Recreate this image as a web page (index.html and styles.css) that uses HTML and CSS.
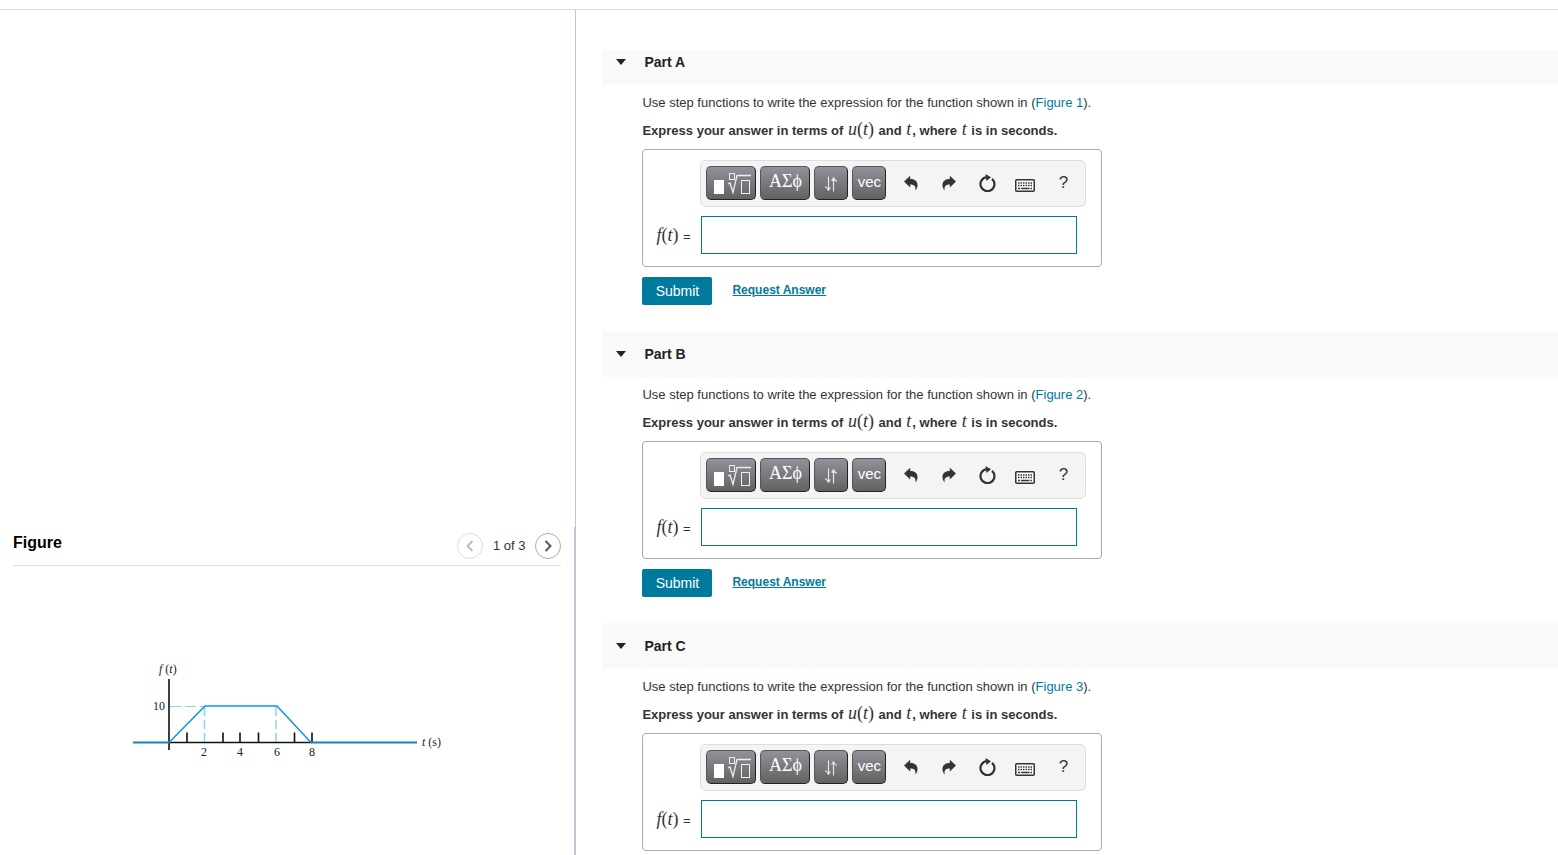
FILE: index.html
```html
<!DOCTYPE html>
<html lang="en">
<head>
    <meta charset="UTF-8">
    <meta name="viewport" content="width=device-width, initial-scale=1.0">
    <title>Step functions</title>
    <link rel="stylesheet" href="styles.css">
</head>
<body>
    <!-- shared icons -->
    <svg class="sprite" aria-hidden="true">
        <symbol id="i-root" viewBox="0 0 40 24">
            <rect x="3" y="9" width="10" height="14" fill="#fff"/>
            <g fill="none" stroke="#eee">
                <rect x="18.500" y="2.500" width="5" height="6"/>
                <path d="M17 13l2-1 3 9.500 4-17h14" stroke-width="1.300"/>
                <rect x="30.500" y="9.500" width="8" height="13"/>
            </g>
        </symbol>
        <symbol id="i-arrows" viewBox="0 0 16 18">
            <path d="M5.500 2.500v14M2 12.500c2 .8 3 2 3.500 4 .3-1.200 1-2.300 2-3M10.500 17.500v-14M8.500 6.500c1-.7 1.700-1.800 2-3 .5 2 1.500 3.200 3.500 4" fill="none" stroke="#e4e4e4" stroke-width="1.200"/>
        </symbol>
        <symbol id="i-undo" viewBox="0 0 16 16">
            <path d="M1 6.500L7.200.8V4c5 0 7.300 2.600 7.300 6 0 2.300-.9 4.200-2.200 5.500.7-3.800-.5-6-5.100-6v3z" fill="#333"/>
        </symbol>
        <symbol id="i-reset" viewBox="0 0 18 18">
            <path d="M14 4.800A7 7 0 1 1 8.500 3.200" fill="none" stroke="#333" stroke-width="2.200"/>
            <path d="M7.500 0l5.500 3.300-4.500 3.700z" fill="#333"/>
        </symbol>
        <symbol id="i-keyboard" viewBox="0 0 20 13">
            <rect x=".75" y=".75" width="18.500" height="11.500" rx="1" fill="#fff" stroke="#333" stroke-width="1.500"/>
            <path d="M3 4h14M3 6.500h14" stroke="#333" stroke-width="1.300" stroke-dasharray="1.500 1"/>
            <path d="M3 9.500h2M6 9.500h8.500M15.500 9.500H17" stroke="#333" stroke-width="1.300"/>
        </symbol>
        <symbol id="i-chevron" viewBox="0 0 8 12">
            <path d="M1.500 1l5 5-5 5" fill="none" stroke="currentColor" stroke-width="2"/>
        </symbol>
    </svg>

    <div class="wrapper">
        <div class="left">
            <section class="figure">
                <div class="figure-head">
                    <h2>Figure</h2>
                    <div class="pager">
                        <button type="button" class="prev" aria-label="Previous figure" disabled><svg><use href="#i-chevron"/></svg></button>
                        <span>1 of 3</span>
                        <button type="button" class="next" aria-label="Next figure"><svg><use href="#i-chevron"/></svg></button>
                    </div>
                </div>
                <svg class="graph" viewBox="0 0 320 110" role="img" aria-label="Graph of f(t)">
                    <g fill="none" stroke="#8ed0f5">
                        <path d="M43 51.500h35" stroke-dasharray="11 4"/>
                        <path d="M77.500 52v35M149 52v35" stroke-width="1.500" stroke-dasharray="9 4"/>
                    </g>
                    <path d="M42 24v71M42 87.500h143M60 87V77.500M96 87V77.500M113 87V77.500M131.500 87V77.500M167.500 87V77.500M185 87V77.500" fill="none" stroke="#111" stroke-width="1.600"/>
                    <path d="M6 87.500h36M184 87.500h106" stroke="#1480c8" stroke-width="2"/>
                    <path d="M42 87.500L78 51h72l34 36.500" fill="none" stroke="#0b95e9" stroke-width="1.500"/>
                    <g class="graph-text">
                        <text x="32" y="18"><tspan class="it">f</tspan> (<tspan class="it">t</tspan>)</text>
                        <text x="26" y="55">10</text>
                        <text x="74" y="101">2</text>
                        <text x="110" y="101">4</text>
                        <text x="147" y="101">6</text>
                        <text x="182" y="101">8</text>
                        <text x="295" y="91"><tspan class="it">t</tspan> (s)</text>
                    </g>
                </svg>
            </section>
        </div>

        <main class="right">
            <section class="part">
                <h3 class="part-head"><span class="caret"></span>Part A</h3>
                <div class="part-body">
                    <p>Use step functions to write the expression for the function shown in (<a href="#">Figure 1</a>).</p>
                    <p class="express">Express your answer in terms of <span class="math"><i>u</i>(<i>t</i>)</span> and <span class="math"><i>t</i></span>, where <span class="math"><i>t</i></span> is in seconds.</p>
                    <div class="answer">
                        <div class="toolbar">
                            <button type="button" class="key wide" aria-label="Templates"><svg class="root"><use href="#i-root"/></svg></button>
                            <button type="button" class="key wide greek">ΑΣϕ</button>
                            <button type="button" class="key" aria-label="Sub and superscript"><svg class="arrows"><use href="#i-arrows"/></svg></button>
                            <button type="button" class="key vec">vec</button>
                            <div class="tools">
                                <button type="button" aria-label="Undo"><svg><use href="#i-undo"/></svg></button>
                                <button type="button" aria-label="Redo"><svg class="flip"><use href="#i-undo"/></svg></button>
                                <button type="button" aria-label="Reset"><svg class="reset"><use href="#i-reset"/></svg></button>
                                <button type="button" aria-label="Keyboard"><svg class="keyboard"><use href="#i-keyboard"/></svg></button>
                                <button type="button">?</button>
                            </div>
                        </div>
                        <label for="ansA"><span class="math"><i>f</i>(<i>t</i>)</span> =</label>
                        <input type="text" id="ansA">
                    </div>
                    <div class="actions">
                        <button type="button" class="submit">Submit</button>
                        <a href="#">Request Answer</a>
                    </div>
                </div>
            </section>

            <section class="part">
                <h3 class="part-head"><span class="caret"></span>Part B</h3>
                <div class="part-body">
                    <p>Use step functions to write the expression for the function shown in (<a href="#">Figure 2</a>).</p>
                    <p class="express">Express your answer in terms of <span class="math"><i>u</i>(<i>t</i>)</span> and <span class="math"><i>t</i></span>, where <span class="math"><i>t</i></span> is in seconds.</p>
                    <div class="answer">
                        <div class="toolbar">
                            <button type="button" class="key wide" aria-label="Templates"><svg class="root"><use href="#i-root"/></svg></button>
                            <button type="button" class="key wide greek">ΑΣϕ</button>
                            <button type="button" class="key" aria-label="Sub and superscript"><svg class="arrows"><use href="#i-arrows"/></svg></button>
                            <button type="button" class="key vec">vec</button>
                            <div class="tools">
                                <button type="button" aria-label="Undo"><svg><use href="#i-undo"/></svg></button>
                                <button type="button" aria-label="Redo"><svg class="flip"><use href="#i-undo"/></svg></button>
                                <button type="button" aria-label="Reset"><svg class="reset"><use href="#i-reset"/></svg></button>
                                <button type="button" aria-label="Keyboard"><svg class="keyboard"><use href="#i-keyboard"/></svg></button>
                                <button type="button">?</button>
                            </div>
                        </div>
                        <label for="ansB"><span class="math"><i>f</i>(<i>t</i>)</span> =</label>
                        <input type="text" id="ansB">
                    </div>
                    <div class="actions">
                        <button type="button" class="submit">Submit</button>
                        <a href="#">Request Answer</a>
                    </div>
                </div>
            </section>

            <section class="part">
                <h3 class="part-head"><span class="caret"></span>Part C</h3>
                <div class="part-body">
                    <p>Use step functions to write the expression for the function shown in (<a href="#">Figure 3</a>).</p>
                    <p class="express">Express your answer in terms of <span class="math"><i>u</i>(<i>t</i>)</span> and <span class="math"><i>t</i></span>, where <span class="math"><i>t</i></span> is in seconds.</p>
                    <div class="answer">
                        <div class="toolbar">
                            <button type="button" class="key wide" aria-label="Templates"><svg class="root"><use href="#i-root"/></svg></button>
                            <button type="button" class="key wide greek">ΑΣϕ</button>
                            <button type="button" class="key" aria-label="Sub and superscript"><svg class="arrows"><use href="#i-arrows"/></svg></button>
                            <button type="button" class="key vec">vec</button>
                            <div class="tools">
                                <button type="button" aria-label="Undo"><svg><use href="#i-undo"/></svg></button>
                                <button type="button" aria-label="Redo"><svg class="flip"><use href="#i-undo"/></svg></button>
                                <button type="button" aria-label="Reset"><svg class="reset"><use href="#i-reset"/></svg></button>
                                <button type="button" aria-label="Keyboard"><svg class="keyboard"><use href="#i-keyboard"/></svg></button>
                                <button type="button">?</button>
                            </div>
                        </div>
                        <label for="ansC"><span class="math"><i>f</i>(<i>t</i>)</span> =</label>
                        <input type="text" id="ansC">
                    </div>
                </div>
            </section>
        </main>
    </div>
</body>
</html>
```
FILE: styles.css
```css
*{
    margin: 0;
    padding: 0;
    box-sizing: border-box;
}
body{
    height: 100vh;
    padding-top: 9px;
    overflow: hidden;
    background: #fff;
    color: #333;
    font-family: "Liberation Sans",Arial,sans-serif;
    font-size: 13px;
}
button,input{
    font-family: inherit;
}
a{
    color: #007a9c;
}
.sprite{
    display: none;
}
.wrapper{
    display: flex;
    height: 100%;
    border-top: 1px solid #ddd;
}

/* left pane */
.left{
    display: flex;
    flex-direction: column;
    justify-content: flex-end;
    flex: 0 0 37%;
    border-right: 1px solid #b9c9da;
}
.figure{
    height: 328px;
    padding: 0 13px;
    border-right: 1px solid #b9c9da;
}
.figure-head{
    display: flex;
    justify-content: space-between;
    padding: 6px 0;
    border-bottom: 1px solid #ddd;
}
.figure-head h2{
    color: #000;
    font-size: 16px;
    line-height: 20px;
}
.pager{
    display: flex;
    align-items: center;
    gap: 10px;
    height: 26px;
    line-height: 28px;
}
.pager button{
    display: flex;
    align-items: center;
    justify-content: center;
    width: 26px;
    height: 26px;
    border: 1px solid #aaa;
    border-radius: 50%;
    background: #fff;
    color: #555;
}
.pager svg{
    width: 8px;
    height: 12px;
}
.pager .prev{
    border-color: #ddd;
    color: #bbb;
}
.prev svg{
    transform: scaleX(-1);
}
.graph{
    display: block;
    width: 320px;
    height: 110px;
    margin: 89px auto 0;
}
.graph-text{
    fill: #222;
    font-family: "Liberation Serif",serif;
    font-size: 12px;
}
.graph-text .it{
    font-style: italic;
}

/* right pane */
.right{
    flex: 1;
    padding: 40px 0 0 26px;
    overflow: hidden;
}
.part-head{
    display: flex;
    align-items: center;
    height: 46px;
    padding-left: 14px;
    background: #f9f9f9;
    color: #222;
    font-size: 14px;
}
.part:first-child .part-head{
    height: 35px;
    padding-bottom: 11px;
}
.caret{
    margin-right: 18px;
    border: 5px solid transparent;
    border-top: 6px solid #222;
    border-bottom: 0;
}
.part-body{
    padding: 9px 20px 26px 40px;
}
.part-body p{
    line-height: 18px;
}
.part-body p a{
    text-decoration: none;
}
.part-body .express{
    height: 18px;
    margin: 8px 0 11px;
    font-weight: bold;
}
.math{
    padding: 0 1px;
    font-family: "Liberation Serif",serif;
    font-size: 18px;
    font-weight: normal;
    line-height: 18px;
}
.answer{
    display: grid;
    grid-template-columns: 57px 1fr;
    row-gap: 9px;
    max-width: 460px;
    padding: 10px 15px 12px 0;
    border: 1px solid #aaa;
    border-radius: 4px;
}
.toolbar{
    display: flex;
    grid-column: 2;
    gap: 4px;
    padding: 5px;
    height: 47px;
    border: 1px solid #ddd;
    border-radius: 6px;
    background: #f4f4f4;
}
.key{
    display: flex;
    align-items: center;
    justify-content: center;
    width: 34px;
    height: 34px;
    border: 1px solid #555;
    border-right-color: #222;
    border-bottom-color: #222;
    border-radius: 5px;
    background: linear-gradient(#93909a,#626262);
    color: #fff;
    font-size: 15px;
}
.wide{
    width: 50px;
}
.greek,.vec{
    padding-bottom: 3px;
}
.toolbar .greek{
    font-family: "Liberation Serif",serif;
    font-size: 18px;
}
.root{
    width: 40px;
    height: 24px;
}
.arrows{
    width: 16px;
    height: 18px;
}
.tools{
    display: flex;
    gap: 4px;
    margin-left: 4px;
}
.tools button{
    display: flex;
    align-items: center;
    justify-content: center;
    width: 34px;
    height: 34px;
    border: 0;
    background: none;
    color: #333;
    font-size: 17px;
}
.tools svg{
    width: 16px;
    height: 16px;
}
.tools .flip{
    transform: scaleX(-1);
}
.tools .reset{
    width: 18px;
    height: 18px;
}
.tools .keyboard{
    width: 20px;
    height: 13px;
    margin-top: 4px;
}
.answer label{
    align-self: center;
    padding-left: 12px;
    white-space: nowrap;
}
.answer input{
    height: 38px;
    margin: 0 9px 0 1px;
    padding: 0 8px;
    border: 1px solid #007a9c;
    font-size: 16px;
}
.actions{
    display: flex;
    gap: 20px;
    margin-top: 10px;
}
.submit{
    width: 70px;
    height: 28px;
    border: 0;
    border-radius: 2px;
    background: #007a9c;
    color: #fff;
    font-size: 14px;
}
.actions a{
    font-size: 12px;
    font-weight: bold;
    line-height: 26px;
}
```
